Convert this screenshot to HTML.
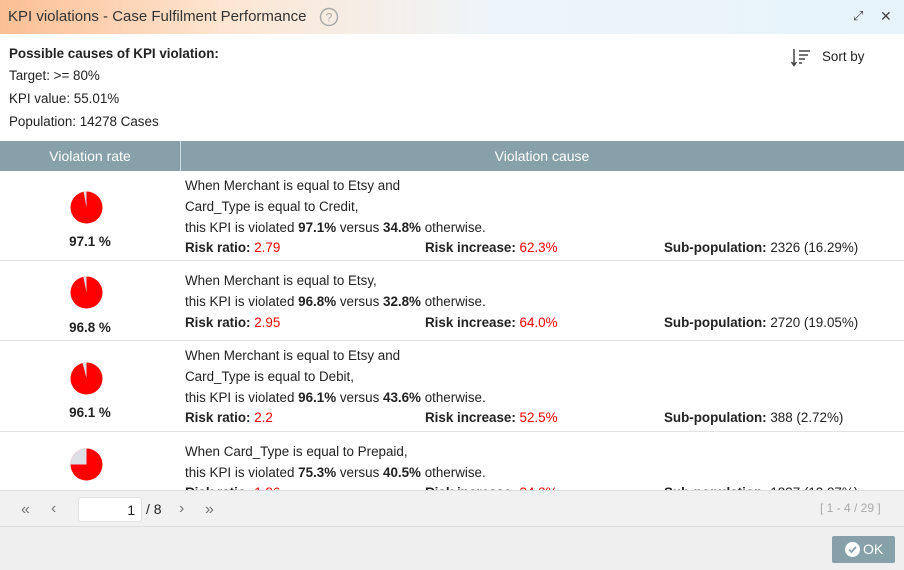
<!DOCTYPE html>
<html><head><meta charset="utf-8"><style>
*{box-sizing:border-box;margin:0;padding:0}
body{width:904px;height:570px;overflow:hidden;font-family:"Liberation Sans",sans-serif;font-size:13.4px;color:#222;background:#fff;position:relative}
.title{position:absolute;left:0;top:0;width:904px;height:34px;background:linear-gradient(90deg,#fbbf94 0%,#fde6d2 25%,#eef5fa 55%,#e6f3fb 100%);font-size:15px;color:#333}
.title span{position:absolute;left:8px;top:8px}
.abs{position:absolute;white-space:nowrap}
.hdr{position:absolute;top:141px;left:0;width:904px;height:30px;background:#87a1aa;color:#fff;font-size:14px}
.row{position:absolute;left:0;width:904px;border-bottom:1px solid #e3e3e3}
.red{color:#e00}
b{font-weight:bold}
.pager{position:absolute;left:0;top:490px;width:904px;height:37px;background:#f1f1f1;border-top:1px solid #ddd;border-bottom:1px solid #ddd}
.foot{position:absolute;left:0;top:527px;width:904px;height:43px;background:#efefef}
</style></head><body>
<div class="title"><span>KPI violations - Case Fulfilment Performance</span>
<svg class="abs" style="left:319px;top:7px" width="20" height="20"><circle cx="10" cy="10" r="8.5" fill="none" stroke="#aaa" stroke-width="1.5"/><text x="10" y="14.5" font-size="12" text-anchor="middle" fill="#aaa" font-family="Liberation Sans">?</text></svg>
<span style="left:853px;top:8px;font-size:13px;color:#444">⤢</span>
<span style="left:880px;top:8px;font-size:14px;color:#444">✕</span>
</div>
<div class="abs" style="left:9px;top:46px;font-weight:bold">Possible causes of KPI violation:</div>
<div class="abs" style="left:9px;top:68px">Target: &gt;= 80%</div>
<div class="abs" style="left:9px;top:91px">KPI value: 55.01%</div>
<div class="abs" style="left:9px;top:114px">Population: 14278 Cases</div>
<svg class="abs" style="left:791px;top:47px" width="22" height="22"><path d="M3 2v16M0.5 15l2.5 3.5 2.5-3.5" stroke="#444" stroke-width="1.5" fill="none"/><path d="M8 4h11M8 8h9M8 12h6M8 16h3" stroke="#444" stroke-width="1.5"/></svg>
<div class="abs" style="left:822px;top:49px">Sort by</div>
<div class="hdr"><div class="abs" style="left:0;width:180px;top:7px;text-align:center">Violation rate</div><div class="abs" style="left:180px;top:0;width:1px;height:30px;background:#cdd8dc"></div><div class="abs" style="left:180px;width:724px;top:7px;text-align:center">Violation cause</div></div>

<div class="row" style="top:171px;height:90px">
<svg class="abs" style="left:70px;top:20px" width="33" height="33"><circle cx="16.5" cy="16.5" r="16" fill="#f00"/><path d="M16.5 16.5L16.5 0.5A16 16 0 0 0 13.6 0.8Z" fill="#dde0e4"/></svg>
<div class="abs" style="left:0;width:180px;text-align:center;top:63px;font-weight:bold">97.1 %</div>
<div class="abs" style="left:185px;top:7px">When Merchant is equal to Etsy and</div>
<div class="abs" style="left:185px;top:28px">Card_Type is equal to Credit,</div>
<div class="abs" style="left:185px;top:49px">this KPI is violated <b>97.1%</b> versus <b>34.8%</b> otherwise.</div>
<div class="abs" style="left:185px;top:69px"><b>Risk ratio:</b> <span class="red">2.79</span></div>
<div class="abs" style="left:425px;top:69px"><b>Risk increase:</b> <span class="red">62.3%</span></div>
<div class="abs" style="left:664px;top:69px"><b>Sub-population:</b> 2326 (16.29%)</div>
</div>

<div class="row" style="top:261px;height:80px">
<svg class="abs" style="left:70px;top:15px" width="33" height="33"><circle cx="16.5" cy="16.5" r="16" fill="#f00"/><path d="M16.5 16.5L16.5 0.5A16 16 0 0 0 13.3 0.8Z" fill="#dde0e4"/></svg>
<div class="abs" style="left:0;width:180px;text-align:center;top:59px;font-weight:bold">96.8 %</div>
<div class="abs" style="left:185px;top:12px">When Merchant is equal to Etsy,</div>
<div class="abs" style="left:185px;top:33px">this KPI is violated <b>96.8%</b> versus <b>32.8%</b> otherwise.</div>
<div class="abs" style="left:185px;top:54px"><b>Risk ratio:</b> <span class="red">2.95</span></div>
<div class="abs" style="left:425px;top:54px"><b>Risk increase:</b> <span class="red">64.0%</span></div>
<div class="abs" style="left:664px;top:54px"><b>Sub-population:</b> 2720 (19.05%)</div>
</div>

<div class="row" style="top:341px;height:91px">
<svg class="abs" style="left:70px;top:21px" width="33" height="33"><circle cx="16.5" cy="16.5" r="16" fill="#f00"/><path d="M16.5 16.5L16.5 0.5A16 16 0 0 0 12.6 1Z" fill="#dde0e4"/></svg>
<div class="abs" style="left:0;width:180px;text-align:center;top:64px;font-weight:bold">96.1 %</div>
<div class="abs" style="left:185px;top:7px">When Merchant is equal to Etsy and</div>
<div class="abs" style="left:185px;top:28px">Card_Type is equal to Debit,</div>
<div class="abs" style="left:185px;top:49px">this KPI is violated <b>96.1%</b> versus <b>43.6%</b> otherwise.</div>
<div class="abs" style="left:185px;top:69px"><b>Risk ratio:</b> <span class="red">2.2</span></div>
<div class="abs" style="left:425px;top:69px"><b>Risk increase:</b> <span class="red">52.5%</span></div>
<div class="abs" style="left:664px;top:69px"><b>Sub-population:</b> 388 (2.72%)</div>
</div>

<div class="row" style="top:432px;height:60px;border:none;overflow:hidden">
<svg class="abs" style="left:70px;top:16px" width="33" height="33"><circle cx="16.5" cy="16.5" r="16" fill="#f00"/><path d="M16.5 16.5L16.5 0.5A16 16 0 0 0 0.5 16.5Z" fill="#dde0e4"/></svg>
<div class="abs" style="left:185px;top:12px">When Card_Type is equal to Prepaid,</div>
<div class="abs" style="left:185px;top:33px">this KPI is violated <b>75.3%</b> versus <b>40.5%</b> otherwise.</div>
<div class="abs" style="left:185px;top:53px"><b>Risk ratio:</b> <span class="red">1.86</span></div>
<div class="abs" style="left:425px;top:53px"><b>Risk increase:</b> <span class="red">34.8%</span></div>
<div class="abs" style="left:664px;top:53px"><b>Sub-population:</b> 1837 (12.87%)</div>
</div>

<div class="pager">
<div class="abs" style="left:21px;top:10px;color:#777;font-size:16px">«</div>
<div class="abs" style="left:51px;top:9px;color:#777;font-size:16px">‹</div>
<div class="abs" style="left:78px;top:6px;width:64px;height:25px;background:#fff;border:1px solid #e2e2e2;border-radius:3px;text-align:right;padding:4px 6px 0 0;font-size:14px">1</div>
<div class="abs" style="left:146px;top:10px;font-size:14px">/ 8</div>
<div class="abs" style="left:179px;top:9px;color:#777;font-size:16px">›</div>
<div class="abs" style="left:205px;top:10px;color:#777;font-size:16px">»</div>
<div class="abs" style="left:820px;top:10px;color:#aaa;font-size:12px">[ 1 - 4 / 29 ]</div>
</div>
<div class="foot">
<div class="abs" style="left:832px;top:9px;width:63px;height:27px;background:#87a1aa;border-radius:2px;color:#fff;font-size:14px">
<svg class="abs" style="left:13px;top:6px" width="15" height="15"><circle cx="7.5" cy="7.5" r="7.5" fill="#fff"/><path d="M4 7.5l2.5 2.5 4.5-5" stroke="#87a1aa" stroke-width="1.8" fill="none"/></svg>
<span class="abs" style="left:31px;top:5px">OK</span></div>
</div>
</body></html>
